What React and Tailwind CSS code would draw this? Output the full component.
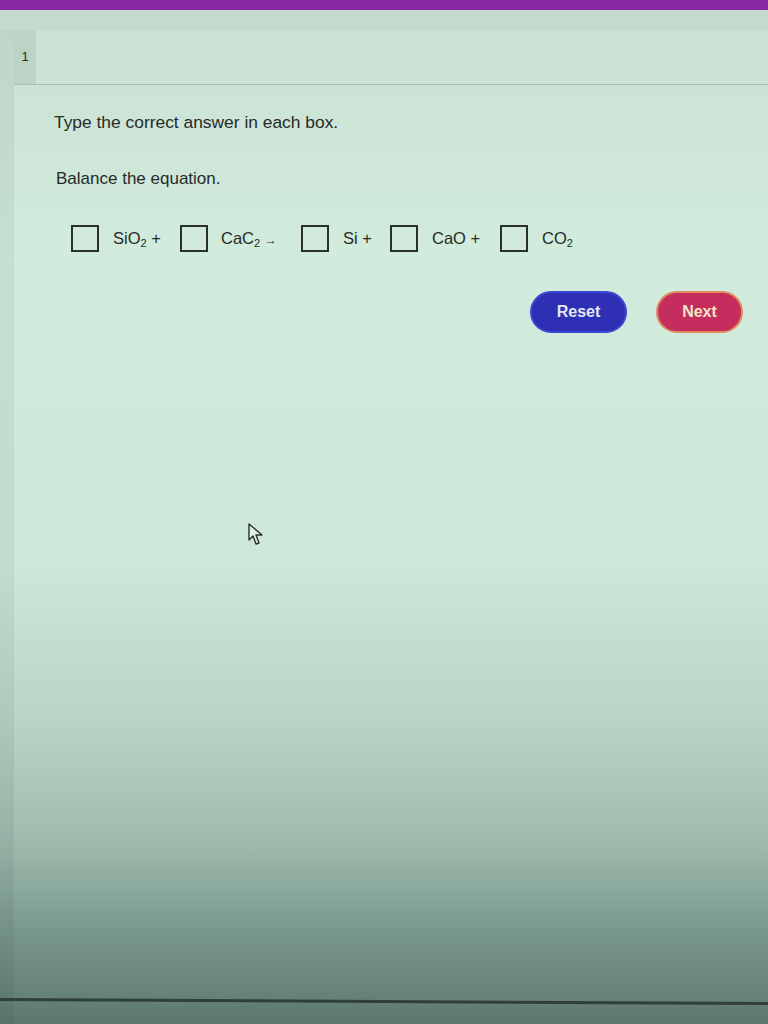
import React from "react";

function Box() {
  return <div className="shrink-0 w-[28px] h-[27px] border-2 border-[#2a302c] bg-[#d2eadb]" />;
}

export default function App() {
  return (
    <div className="relative w-[768px] h-[1024px] overflow-hidden flex flex-col bg-[linear-gradient(180deg,#c9e0d3_0%,#d1ebdc_25%,#cde8d8_55%,#b9d5c6_70%,#9fbcaf_82%,#7a978c_91%,#5d786f_100%)] font-['Liberation_Sans',Arial,sans-serif] text-[#262b28]">
      <div className="h-[10px] shrink-0 bg-[#8a2aa3]" />
      <div className="h-[20px] shrink-0 bg-[#c3dacd]" />
      <div className="flex flex-1">
        <div className="w-[14px] bg-[#0b2a1a]/[0.06]" />
        <div className="flex-1 flex flex-col">
          <div className="flex h-[55px] border-b border-[#a9c1b5]">
            <div className="w-[22px] flex items-center justify-center text-[13px] bg-[#bcd3c6]">1</div>
          </div>
          <div className="pl-[40px] pt-[27px] text-[17.4px] leading-[20px]">Type the correct answer in each box.</div>
          <div className="pl-[42px] pt-[37px] text-[17px] leading-[20px]">Balance the equation.</div>
          <div className="pl-[57px] pt-[36px] flex items-center text-[16.5px]">
            <Box />
            <span className="ml-[14px] w-[67px]">SiO<sub className="text-[11px]">2</sub> +</span>
            <Box />
            <span className="ml-[13px] w-[80px]">CaC<sub className="text-[11px]">2</sub> <span className="text-[12px]">→</span></span>
            <Box />
            <span className="ml-[14px] w-[47px]">Si +</span>
            <Box />
            <span className="ml-[14px] w-[68px]">CaO +</span>
            <Box />
            <span className="ml-[14px]">CO<sub className="text-[11px]">2</sub></span>
          </div>
          <div className="flex justify-end gap-[29px] pr-[25px] pt-[39px]">
            <button className="w-[97px] h-[42px] rounded-full bg-[#2e2fb4] border-2 border-[#3a4ad0] text-[#e4e8f5] text-[16px] font-bold">Reset</button>
            <button className="w-[87px] h-[42px] rounded-full bg-[#c42d5e] border-2 border-[#e08a5a] text-[#f3e6c8] text-[16px] font-bold">Next</button>
          </div>
        </div>
      </div>
      <svg className="absolute left-[248px] top-[523px]" width="16" height="23" viewBox="0 0 16 23">
        <path d="M1 1 L1 17 L5 13 L8 21 L11 20 L8 12 L14 12 Z" fill="#dff0e4" stroke="#2a302c" strokeWidth="1.4" strokeLinejoin="round" />
      </svg>
      <div className="absolute left-0 right-0 top-[1000px] h-[3px] bg-[#2f403a] rotate-[0.3deg]" />
    </div>
  );
}
